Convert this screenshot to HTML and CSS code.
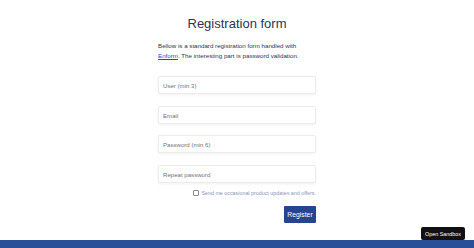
FILE: index.html
```html
<!DOCTYPE html>
<html lang="en">
<head>
  <meta charset="UTF-8" />
  <title>Registration form</title>
  <link rel="stylesheet" href="styles.css">
</head>
<body>
  <div class="pagina">
    <h1 class="titulo">Registration form</h1>
    <p class="intro">Bellow is a standard registration form handled with <a href="#">Enform</a>. The interesting part is password validation.</p>

    <form class="formulario">
      <input class="campo" type="text" placeholder="User (min 3)">
      <input class="campo" type="text" placeholder="Email">
      <input class="campo" type="password" placeholder="Password (min 6)">
      <input class="campo" type="password" placeholder="Repeat password">
      <label class="opcao"><span class="caixa"></span>Send me occasional product updates and offers.</label>
      <div class="acoes">
        <button class="botao" type="button">Register</button>
      </div>
    </form>
  </div>
  <div class="rodape"></div>
  <button class="sandbox">Open Sandbox</button>
</body>
</html>
```

FILE: styles.css
```css
body {
  margin: 0;
  font-family: 'Liberation Sans', Arial, sans-serif;
  background: #fff;
  width: 474px;
  height: 248px;
  overflow: hidden;
  position: relative;
}

.pagina {
  width: 158px;
  margin: 0 auto;
  height: 240px;
}

.titulo {
  margin: 0;
  padding-top: 15px;
  font-size: 13px;
  font-weight: normal;
  text-align: center;
  color: #2b3553;
  line-height: 17px;
}

.intro {
  margin: 9px 0 0;
  font-size: 6.2px;
  line-height: 10px;
  color: #2b3451;
}

.intro a {
  color: #2a3fd0;
}

.formulario {
  display: flex;
  flex-direction: column;
  margin-top: 15px;
}

.campo {
  box-sizing: border-box;
  width: 158px;
  height: 18px;
  margin-bottom: 12px;
  padding: 0 4px;
  border: 1px solid #ececec;
  border-radius: 2px;
  box-shadow: 0 1px 3px rgba(0,0,0,0.06);
  font-family: inherit;
  font-size: 6.1px;
  outline: none;
}

.campo:nth-of-type(2) {
  margin-bottom: 11px;
}

.campo::placeholder {
  color: #737373;
}

.opcao {
  display: flex;
  align-items: center;
  justify-content: flex-end;
  margin-top: -6px;
  font-size: 5.35px;
  color: #8797b8;
  height: 8px;
}

.caixa {
  width: 4px;
  height: 4px;
  border: 1px solid #8a8a8a;
  border-radius: 1px;
  margin-right: 2px;
  background: #fff;
}

.acoes {
  display: flex;
  justify-content: flex-end;
  margin-top: 9px;
}

.botao {
  width: 32px;
  height: 17px;
  padding: 0;
  border: none;
  border-radius: 1px;
  background-color: #27458d;
  color: #fff;
  font-family: inherit;
  font-size: 6.8px;
}

.rodape {
  height: 8px;
  background-color: #2a4f99;
}

.sandbox {
  position: absolute;
  left: 421px;
  top: 227px;
  width: 44px;
  height: 13px;
  padding: 0;
  border: none;
  border-radius: 2px;
  background: #111;
  color: #fff;
  font-family: inherit;
  font-size: 5.4px;
}
```
